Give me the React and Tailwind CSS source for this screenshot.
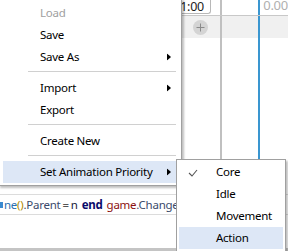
import React from "react";

const Arrow = () => (
  <svg width="4" height="7" viewBox="0 0 4 7" className="absolute right-[7px] top-1/2 -translate-y-1/2">
    <path d="M0 0 L4 3.5 L0 7 Z" fill="#000" />
  </svg>
);

const Item = ({ children, disabled, arrow, active }) => (
  <div
    className={`relative h-[22px] flex items-center pl-[37px] mx-[3px] ${active ? "bg-[#dde7f6]" : ""} ${disabled ? "text-[#a0a0a0]" : "text-black"}`}
  >
    {children}
    {arrow && <Arrow />}
  </div>
);

const Sep = () => (
  <div className="h-[9px] flex items-start pt-[3px] pl-[28px] pr-[5px]">
    <div className="h-px w-full bg-[#d0d0d0]" />
  </div>
);

const SubItem = ({ children, checked, active }) => (
  <div className={`relative h-[22px] flex items-center pl-[37px] mx-[2px] ${active ? "bg-[#dde7f6]" : ""}`}>
    {checked && (
      <svg width="10" height="8" viewBox="0 0 10 8" className="absolute left-[9px] top-[8px]">
        <path d="M1 4 L4 7 L9 1" stroke="#555" strokeWidth="1.1" fill="none" />
      </svg>
    )}
    {children}
  </div>
);

export default function App() {
  return (
    <div
      className="relative w-[288px] h-[251px] overflow-hidden bg-white text-[11.5px] tracking-[-0.25px]"
      style={{ fontFamily: '"Noto Sans", "Segoe UI", sans-serif' }}
    >
      {/* background editor */}
      <div className="flex flex-col h-full">
        <div className="flex h-[186px]">
          <div className="w-[181px] bg-white" />
          <div className="w-[3px] bg-[#bdbdbd]" />
          <div className="flex-1 flex flex-col">
            <div className="flex h-[16px] border-b border-[#c8c8c8]">
              <div className="w-[31px] h-[14px] border-r border-b border-[#b8b8b8] rounded-br-[3px] leading-[13px] text-[12.5px] text-[#222]">
                1:00
              </div>
              <div className="w-[9px]" />
              <div className="w-[2px] bg-[#c0c0c0]" />
              <div className="w-[36px]" />
              <div className="w-[2px] bg-[#3a96d0]" />
              <div className="pl-[3px] text-[#b0b0b0] leading-[10px] text-[13px]">0.00</div>
            </div>
            <div className="flex h-[22px] bg-[#f0f0f0]">
              <div className="w-[40px] flex items-center justify-center">
                <div className="w-[15px] h-[15px] rounded-full bg-[#d4d4d4] flex items-center justify-center">
                  <svg width="9" height="9" viewBox="0 0 9 9">
                    <path d="M4.5 0.5 V8.5 M0.5 4.5 H8.5" stroke="#8a8a8a" strokeWidth="1" />
                  </svg>
                </div>
              </div>
              <div className="w-[2px] bg-[#c0c0c0]" />
              <div className="w-[36px]" />
              <div className="w-[2px] bg-[#3a96d0]" />
            </div>
            <div className="flex flex-1 bg-white">
              <div className="w-[40px]" />
              <div className="w-[2px] bg-[#c0c0c0]" />
              <div className="w-[36px]" />
              <div className="w-[2px] bg-[#3a96d0]" />
            </div>
          </div>
        </div>
        <div className="h-[8px] bg-white" />
        <div className="h-[21px] border-y border-[#dcdcdc] flex items-center whitespace-nowrap text-[11.5px] leading-none">
          <span className="inline-block w-[3px] h-[6px] bg-[#3a8ad0] mr-[1px]" />
          <span className="text-[#2a6fb0]">ne</span>
          <span className="text-[#b08a00]">()</span>
          <span className="text-[#3b4a6b]">.Parent</span>
          <span className="text-[#555] px-[2px]">=</span>
          <span className="text-[#1a1a3a]">n</span>
          <span className="text-[#0a0a6a] font-bold px-[4px]">end</span>
          <span className="text-[#8b1010]">game</span>
          <span className="text-[#3b4a6b]">.ChangeHistoryService</span>
        </div>
        <div className="flex-1 bg-white" />
        <div className="h-[3px] bg-[#c4c4c4]" />
      </div>

      {/* main menu */}
      <div className="absolute left-[-2px] top-[-2px] w-[184px] pl-[2px] bg-white border-r border-b border-[#a0a0a0] shadow-[2px_2px_2px_rgba(0,0,0,0.25)] pt-[4px] pb-[2px]">
        <Item disabled>Load</Item>
        <Item>Save</Item>
        <Item arrow>Save As</Item>
        <Sep />
        <Item arrow>Import</Item>
        <Item>Export</Item>
        <Sep />
        <Item>Create New</Item>
        <Sep />
        <Item arrow active>Set Animation Priority</Item>
      </div>

      {/* submenu */}
      <div className="absolute left-[176px] top-[159px] w-[110px] bg-white border border-[#a0a0a0] shadow-[2px_2px_2px_rgba(0,0,0,0.25)] pt-[1px] pb-[2px]">
        <SubItem checked>Core</SubItem>
        <SubItem>Idle</SubItem>
        <SubItem>Movement</SubItem>
        <SubItem active>Action</SubItem>
      </div>
    </div>
  );
}
